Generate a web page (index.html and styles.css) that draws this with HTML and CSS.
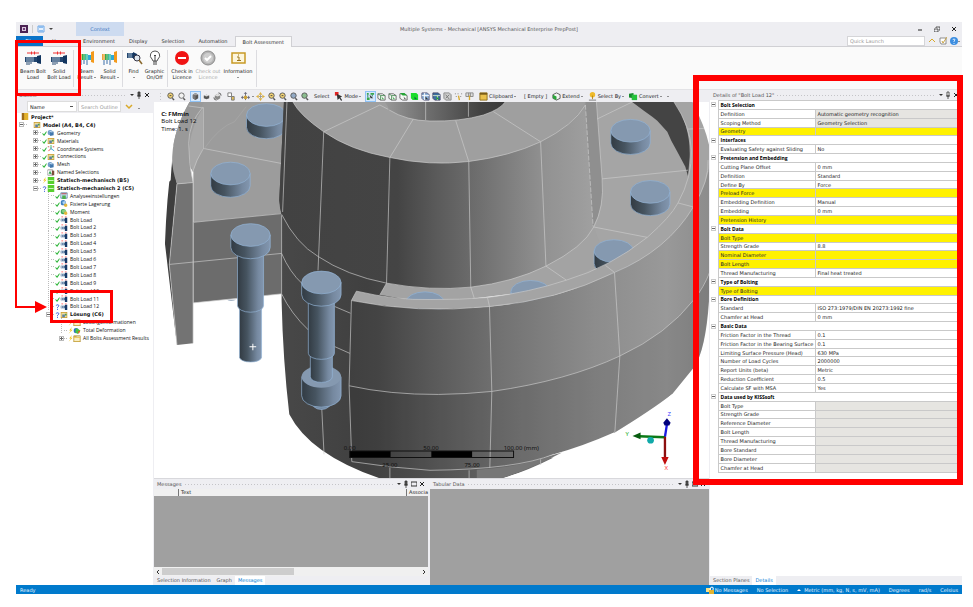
FILE: index.html
```html
<!DOCTYPE html>
<html lang="en">
<head>
<meta charset="utf-8">
<title>Multiple Systems - Mechanical</title>
<link rel="stylesheet" href="styles.css">
</head>
<body>
<svg class="defs" aria-hidden="true">
  <defs>
    <symbol id="bolt-load" viewBox="0 0 18 16"><path d="M3 3h4M11 3h4" stroke="#e33" stroke-width="1"/><path d="M7 1l2 2-2 2zM11 1L9 3l2 2z" fill="#e33"/><path d="M1 7h12v5H1z" fill="#23466f"/><path d="M3 7v5M5 7v5M7 7v5M9 7v5" stroke="#a9bccf" stroke-width="1"/><path d="M13 6l4-1v9l-4-1z" fill="#12355f"/><path d="M3 12v3M5 12v3M7 12v2" stroke="#23466f"/></symbol>
    <symbol id="bolt-result" viewBox="0 0 18 16"><path d="M1 4h3v6H1z" fill="#e8a33c"/><path d="M4 4h3v6H4z" fill="#35a84b"/><path d="M7 4h3v6H7z" fill="#39bfa0"/><path d="M10 5h3v5h-3z" fill="#2fa9d6"/><path d="M13 2l3 -1v12l-3-1z" fill="#f39a1c"/><path d="M3 10v5M6 10v4M9 10v5" stroke="#3b6ea8"/><path d="M3 4v6M6 4v6M9 4v6" stroke="#fff" stroke-opacity=".5"/></symbol>
    <symbol id="tree-bolt" viewBox="0 0 8 8"><path d="M1 1h2M5 1h2" stroke="#f66" stroke-width="1"/><path d="M0 3h5v3H0z" fill="#466a94"/><path d="M1 3v4M3 3v4" stroke="#c5d3e2" stroke-width="1"/><path d="M5 2h3v6H5z" fill="#163a68"/></symbol>
    <symbol id="folder" viewBox="0 0 8 8"><path d="M0 1h3l1 1h4v6H0z" fill="#e6bd4a"/><path d="M1 3h6v4H1z" fill="#f8eec4"/><path d="M0 1h8v7H0z" fill="none" stroke="#a98b36" stroke-width="1"/></symbol>
    <symbol id="folder-part" viewBox="0 0 8 8"><path d="M0 1h8v7H0z" fill="#c89a2c"/><path d="M1 2h6v5H1z" fill="#efdda0"/><path d="M2 4h3v3H2z" fill="#5b7fa3"/><path d="M5 3h2v2H5z" fill="#4b9b52"/></symbol>
    <symbol id="solid" viewBox="0 0 8 8"><circle cx="3" cy="4" r="3" fill="#6f9cc9"/><path d="M3 2l4 1v4l-4 1z" fill="#4176ac"/><path d="M3 2l4 1-2 1-3-1z" fill="#b8d3ee"/></symbol>
    <symbol id="load" viewBox="0 0 8 8"><circle cx="3" cy="3" r="3" fill="#3e7fc0"/><path d="M2 2l3-1 1 3-3 1z" fill="#a9d0f1"/><circle cx="6" cy="6" r="2" fill="#e3b73f"/></symbol>
    <symbol id="moment" viewBox="0 0 8 8"><circle cx="3" cy="4" r="3" fill="#3ba55b"/><path d="M1 3l4-2 2 3-4 2z" fill="#86cf83"/><circle cx="6" cy="6" r="2" fill="#e3b73f"/></symbol>
    <symbol id="axes" viewBox="0 0 8 8"><path d="M4 4V0" stroke="#35b44a"/><path d="M4 4L1 7" stroke="#e33"/><path d="M4 4l4 3" stroke="#2aa7df"/><circle cx="4" cy="4" r="1.300" fill="#7bc"/><path d="M0 2h2M6 2h2" stroke="#c55"/></symbol>
    <symbol id="named" viewBox="0 0 8 8"><path d="M0 1h6v6H0z" fill="#fff" stroke="#888"/><path d="M1 5l2-3 2 4z" fill="#3ba55b"/><path d="M5 2h3v5H5z" fill="#7d4c3a"/></symbol>
    <symbol id="system" viewBox="0 0 8 8"><path d="M0 0h8v8H0z" fill="#58cf2e"/><path d="M1 4h6" stroke="#d9ffd0" stroke-width="1"/></symbol>
    <symbol id="settings" viewBox="0 0 8 8"><path d="M0 1h8v6H0z" fill="#b9d7ec" stroke="#4d7aa0"/><path d="M2 4h4v4H2z" fill="#4fae4d"/><path d="M1 2h6" stroke="#c44"/></symbol>
    <symbol id="deform" viewBox="0 0 8 8"><circle cx="3" cy="4" r="3" fill="#2b75c4"/><path d="M3 1l5 3-3 4-3-2z" fill="#4fc23b"/><path d="M5 5l3-1-2 4z" fill="#e85a24"/></symbol>
    <symbol id="book" viewBox="0 0 8 8"><path d="M1 0h7v8H1z" fill="#e2b22e"/><path d="M0 0h3v8H0z" fill="#9c6b1b"/></symbol>
    <symbol id="check" viewBox="0 0 5 8"><path d="M0 5l2 2 3-4" fill="none" stroke="#2fb53a" stroke-width="1.200"/></symbol>
    <symbol id="flash" viewBox="0 0 5 8"><path d="M4 0L1 4h2L0 8l5-5H3l1-3z" fill="#f2c51b"/></symbol>
    <symbol id="query" viewBox="0 0 5 8"><path d="M1 3q0-1 1.500-1t1.500 1-1.500 2v1M2.500 7v1" fill="none" stroke="#2b4bd5"/></symbol>

    <symbol id="magnify" viewBox="0 0 10 10"><circle cx="5" cy="4" r="3" fill="#f2f2f2" stroke="#666"/><path d="M7 7l2 2" stroke="#555" stroke-width="1.500"/></symbol>
    <symbol id="magnify-y" viewBox="0 0 10 10"><circle cx="5" cy="4" r="3" fill="#f1d274" stroke="#555"/><path d="M7 7l2 2" stroke="#555" stroke-width="1.500"/><path d="M4 4h2" stroke="#444"/></symbol>
    <symbol id="magnify-b" viewBox="0 0 10 10"><circle cx="5" cy="4" r="3" fill="#92a9c5" stroke="#555"/><path d="M7 7l2 2" stroke="#555" stroke-width="1.500"/></symbol>
    <symbol id="magnify-g" viewBox="0 0 10 10"><circle cx="5" cy="4" r="3" fill="#8bbd8f" stroke="#555"/><path d="M7 7l2 2" stroke="#555" stroke-width="1.500"/></symbol>
    <symbol id="cube" viewBox="0 0 10 10"><path d="M2 3l3-2 3 2v4L5 9 2 7z" fill="#555"/><path d="M2 3l3-2 3 2-3 1z" fill="#a3a3a3"/><path d="M5 4v5L2 7V3z" fill="#787878"/></symbol>
    <symbol id="cube-flat" viewBox="0 0 10 10"><path d="M2 4l3-1 3 1v3L5 8 2 7z" fill="#555"/><path d="M2 4l3-1 3 1-3 1z" fill="#ddd"/></symbol>
    <symbol id="cube-spin" viewBox="0 0 10 10"><path d="M2 4l3-2 3 2v3L5 9 2 7z" fill="#888"/><path d="M2 4l3-2 3 2-3 1z" fill="#ddd"/><path d="M6 1q3 0 3 3M1 6q0 3 3 3" fill="none" stroke="#555"/></symbol>
    <symbol id="boxes" viewBox="0 0 10 10"><path d="M1 1h4v4H1z" fill="#fff" stroke="#777"/><path d="M5 5h3v4H5z" fill="#e2bf5a" stroke="#777"/></symbol>
    <symbol id="triad" viewBox="0 0 10 10"><path d="M5 1v8M1 6h8" stroke="#667" stroke-width="1"/><path d="M5 0l2 2H3zM0 6l2-2v4zM10 6L8 4v4z" fill="#667"/><circle cx="5" cy="6" r="2" fill="#c9a03a"/></symbol>
    <symbol id="pan" viewBox="0 0 10 10"><path d="M5 0l2 3H3zM5 10l2-3H3zM0 5l3-2v4zM10 5L7 3v4z" fill="#e0b23a"/><path d="M5 3v4M3 5h4" stroke="#999"/></symbol>
    <symbol id="cursor" viewBox="0 0 10 10"><path d="M1 0h4v4H1z" fill="#e32222"/><path d="M3 2l6 3-2 1 2 3-1 1-2-3-2 2z" fill="#333"/></symbol>
    <symbol id="pick" viewBox="0 0 10 10"><path d="M1 1h2v2H1zM1 6h3v3H1zM5 1h4v2H5z" fill="#39a84b"/><path d="M4 3l4 4H5z" fill="#333"/><path d="M2 3v3M7 3v2" stroke="#276"/></symbol>
    <symbol id="sel" viewBox="0 0 10 10"><path d="M1 2h5l3 2v5H4L1 7z" fill="#f6faf6" stroke="#666"/><path d="M1 2l3 2h5M4 4v5" fill="none" stroke="#4b8c58"/><path d="M5 5l3 3H6z" fill="#39a84b"/></symbol>
    <symbol id="sel-top" viewBox="0 0 10 10"><path d="M1 2h5l3 2v5H4L1 7z" fill="#f6faf6" stroke="#666"/><path d="M1 1h5l3 3H4z" fill="#25a536"/><path d="M5 5l3 3H6z" fill="#555"/></symbol>
    <symbol id="sel-body" viewBox="0 0 10 10"><path d="M1 1h6l2 2v6H3L1 7z" fill="#1bdc2b"/><path d="M5 5l3 3H5z" fill="#164"/></symbol>
    <symbol id="sel-node" viewBox="0 0 10 10"><path d="M1 1h6l2 2v6H3L1 7z" fill="#8fb4dc" stroke="#557"/><path d="M1 4h8M4 1v8" stroke="#fff"/><path d="M5 5l3 3H5z" fill="#333"/></symbol>
    <symbol id="sel-elem" viewBox="0 0 10 10"><path d="M1 1h6l2 2v6H3L1 7z" fill="#3c6ea3" stroke="#446"/><path d="M1 4h8M6 4v5" stroke="#cfe4c6"/><path d="M5 5l3 3H5z" fill="#2a2"/></symbol>
    <symbol id="sel-grey" viewBox="0 0 10 10"><path d="M1 1h6l2 2v6H3L1 7z" fill="#ccc" stroke="#888"/><path d="M3 3l4 5M7 3L3 7" stroke="#777"/></symbol>
    <symbol id="probe" viewBox="0 0 10 10"><path d="M1 2h1M4 2h1M8 2h1M2 5h1M7 5h1" stroke="#777"/><path d="M5 4l1 5" stroke="#d8a92b" stroke-width="1.500"/></symbol>
    <symbol id="probe-box" viewBox="0 0 10 10"><path d="M1 1h8v4H1z" fill="#ddd" stroke="#888"/><path d="M4 1v4M6 1v4" stroke="#888"/><path d="M5 4v5" stroke="#d8a92b" stroke-width="1.500"/></symbol>
    <symbol id="clip" viewBox="0 0 10 10"><path d="M1 1h8v8H1z" fill="#e9c04c" stroke="#8d6d1b"/><path d="M1 1h8v2H1z" fill="#7b5c18"/></symbol>
    <symbol id="extend" viewBox="0 0 10 10"><path d="M1 3l4-2 4 2v4L5 9 1 7z" fill="#f2f7f2" stroke="#555"/><path d="M1 3l4 2v4L1 7z" fill="#2aa53a"/></symbol>
    <symbol id="select-by" viewBox="0 0 10 10"><circle cx="5" cy="3" r="3" fill="#efba2a"/><path d="M5 4v4" stroke="#b58413"/><path d="M1 9h8" stroke="#777"/></symbol>
    <symbol id="convert" viewBox="0 0 10 10"><path d="M0 2l5-1v6l-5-1z" fill="#178b2c"/><path d="M3 3h6v6H3z" fill="#27c23c"/></symbol>
  </defs>
</svg>

<div class="app">
  <header class="titlebar">
    <div class="quick">
      <svg class="logo" viewBox="0 0 8 8"><path d="M0 0h8v8H0z" fill="#4b2253"/><path d="M2 2h4v4H2z" fill="#d9c7dd"/><path d="M3 3h2v2H3z" fill="#6d3b77"/></svg>
      <span class="bar"></span>
      <button class="plain" aria-label="Save"><svg viewBox="0 0 8 8"><path d="M1 1h6v6H1z" fill="#e4f1ff" stroke="#6fa8e6"/><path d="M2 1h4v2H2zM2 5h4v2H2z" fill="#8dbdf0"/></svg></button>
      <span class="caret"></span>
    </div>
    <span class="context">Context</span>
    <span class="caption">Multiple Systems - Mechanical [ANSYS Mechanical Enterprise PrepPost]</span>
    <div class="winbtns">
      <button class="plain" aria-label="Minimize"><svg viewBox="0 0 6 6"><path d="M1 4h4" stroke="#222"/></svg></button>
      <button class="plain" aria-label="Restore"><svg viewBox="0 0 6 6"><path d="M2 2V1h4v3H5M0 3h4v3H0z" fill="none" stroke="#333" stroke-width=".8"/></svg></button>
      <button class="plain" aria-label="Close"><svg viewBox="0 0 6 6"><path d="M1 1l4 4M5 1L1 5" stroke="#222"/></svg></button>
    </div>
  </header>

  <nav class="tabs">
    <a class="tab file" href="#">File</a><a class="tab home" href="#">Home</a><a class="tab" href="#">Environment</a><a class="tab" href="#">Display</a><a class="tab" href="#">Selection</a><a class="tab" href="#">Automation</a><a class="tab current" href="#">Bolt Assessment</a>
    <div class="launch">
      <input type="text" placeholder="Quick Launch" aria-label="Quick Launch">
      <svg viewBox="0 0 8 8"><path d="M1 5l3-3 3 3" fill="none" stroke="#d9a928" stroke-width="1"/></svg>
      <svg viewBox="0 0 8 8"><path d="M1 1h6v6H2L1 5z" fill="#fff" stroke="#666" stroke-width=".7"/><path d="M3 4l1 2 4-6" fill="none" stroke="#c9a343"/></svg>
      <svg class="help" viewBox="0 0 10 8"><circle cx="4" cy="4" r="4" fill="#3c8ee0"/><path d="M3 3q0-1 1-1t1 1L4 4v1M4 6v1" fill="none" stroke="#fff" stroke-width=".8"/><path d="M8 4h2L9 5z" fill="#333"/></svg>
    </div>
  </nav>

  <div class="ribbon">
    <button class="tool"><svg viewBox="0 0 18 16"><use href="#bolt-load"/></svg><span>Beam Bolt<br>Load</span></button>
    <button class="tool"><svg viewBox="0 0 18 16"><use href="#bolt-load"/></svg><span>Solid<br>Bolt Load</span></button>
    <span class="split"></span>
    <button class="tool mid"><svg viewBox="0 0 18 16"><use href="#bolt-result"/></svg><span>Beam<br>Result<i class="dd"></i></span></button>
    <button class="tool mid"><svg viewBox="0 0 18 16"><use href="#bolt-result"/></svg><span>Solid<br>Result<i class="dd"></i></span></button>
    <span class="split"></span>
    <button class="tool slim"><svg viewBox="0 0 18 16"><path d="M2 3h6v5H2z" fill="#23466f"/><path d="M4 3v5M6 3v5" stroke="#9fb5cb"/><path d="M8 2l4 2v4l-4 1z" fill="#12355f"/><circle cx="12" cy="8" r="3" fill="#dfe7ef" stroke="#334"/><path d="M14 10l3 4" stroke="#8a6a2f" stroke-width="1.500"/></svg><span>Find<br><i class="dd"></i></span></button>
    <button class="tool mid"><svg viewBox="0 0 18 16"><path d="M9 1a4.500 4.500 0 0 1 3 8l-1 2H7L6 9a4.500 4.500 0 0 1 3-8z" fill="#fff" stroke="#555"/><path d="M7 12h4M7 14h4M9 11V6M8 5l1 1 1-1" fill="none" stroke="#444"/></svg><span>Graphic<br>On/Off</span></button>
    <span class="split"></span>
    <button class="tool"><svg viewBox="0 0 18 16"><circle cx="9" cy="8" r="7" fill="#f01414"/><path d="M5 7h8v2H5z" fill="#fff"/></svg><span>Check in<br>Licence</span></button>
    <button class="tool" disabled><svg viewBox="0 0 18 16"><circle cx="9" cy="8" r="7" fill="#b5b5b5" stroke="#8c8c8c"/><circle cx="9" cy="8" r="5" fill="#cecece"/><path d="M6 8l2 2 4-4" fill="none" stroke="#fff" stroke-width="2"/></svg><span>Check out<br>Licence</span></button>
    <button class="tool wide"><svg viewBox="0 0 18 16"><path d="M3 3h13v10H3z" fill="#fdf6dc" stroke="#c79a26" stroke-width="1.500"/><path d="M9 5h1M8 7h2v3M8 10.500h4" fill="none" stroke="#9b7417"/></svg><span>Information<br><i class="dd"></i></span></button>
    <span class="split"></span>
  </div>

  <div class="work">
    <aside class="outline">
      <div class="panehead"><span>Outline</span><span class="grip"></span><i class="dd big"></i><svg viewBox="0 0 6 8"><path d="M2 1h2v4H2zM1 5h4M3 5v3" fill="#555" stroke="#333" stroke-width=".8"/></svg><svg viewBox="0 0 6 8"><path d="M1 2l4 4M5 2L1 6" stroke="#222"/></svg></div>
      <div class="search">
        <select aria-label="Search by"><option>Name</option></select>
        <input type="text" placeholder="Search Outline" aria-label="Search Outline">
        <svg viewBox="0 0 8 8"><path d="M1 2l3 3 3-3" fill="none" stroke="#d9a928" stroke-width="1.500"/></svg><i class="dd"></i>
      </div>
      <ul class="tree">
        <li class="l0"><svg class="ic" viewBox="0 0 8 8"><use href="#book"/></svg><b>Project*</b></li>
        <li class="l1 open"><i></i><s></s><em></em><svg class="ic" viewBox="0 0 8 8"><use href="#folder-part"/></svg><b>Model (A4, B4, C4)</b></li>
        <li class="l2 shut"><i></i><s></s><svg class="st" viewBox="0 0 5 8"><use href="#check"/></svg><svg class="ic" viewBox="0 0 8 8"><use href="#solid"/></svg>Geometry</li>
        <li class="l2 shut"><i></i><s></s><svg class="st" viewBox="0 0 5 8"><use href="#check"/></svg><svg class="ic" viewBox="0 0 8 8"><use href="#folder-part"/></svg>Materials</li>
        <li class="l2 shut"><i></i><s></s><svg class="st" viewBox="0 0 5 8"><use href="#check"/></svg><svg class="ic" viewBox="0 0 8 8"><use href="#axes"/></svg>Coordinate Systems</li>
        <li class="l2 shut"><i></i><s></s><svg class="st" viewBox="0 0 5 8"><use href="#check"/></svg><svg class="ic" viewBox="0 0 8 8"><use href="#folder-part"/></svg>Connections</li>
        <li class="l2 shut"><i></i><s></s><svg class="st" viewBox="0 0 5 8"><use href="#check"/></svg><svg class="ic" viewBox="0 0 8 8"><use href="#solid"/></svg>Mesh</li>
        <li class="l2 shut"><i></i><s></s><em></em><svg class="ic" viewBox="0 0 8 8"><use href="#named"/></svg>Named Selections</li>
        <li class="l2 shut"><i></i><s></s><svg class="st" viewBox="0 0 5 8"><use href="#flash"/></svg><svg class="ic" viewBox="0 0 8 8"><use href="#system"/></svg><b>Statisch-mechanisch (B5)</b></li>
        <li class="l2 open"><i></i><s></s><svg class="st" viewBox="0 0 5 8"><use href="#query"/></svg><svg class="ic" viewBox="0 0 8 8"><use href="#system"/></svg><b>Statisch-mechanisch 2 (C5)</b></li>
        <li class="l3"><i></i><s></s><svg class="st" viewBox="0 0 5 8"><use href="#check"/></svg><svg class="ic" viewBox="0 0 8 8"><use href="#settings"/></svg>Analyseeinstellungen</li>
        <li class="l3"><i></i><s></s><svg class="st" viewBox="0 0 5 8"><use href="#check"/></svg><svg class="ic" viewBox="0 0 8 8"><use href="#load"/></svg>Fixierte Lagerung</li>
        <li class="l3"><i></i><s></s><svg class="st" viewBox="0 0 5 8"><use href="#check"/></svg><svg class="ic" viewBox="0 0 8 8"><use href="#moment"/></svg>Moment</li>
        <li class="l3"><i></i><s></s><svg class="st" viewBox="0 0 5 8"><use href="#check"/></svg><svg class="ic" viewBox="0 0 8 8"><use href="#tree-bolt"/></svg>Bolt Load</li>
        <li class="l3"><i></i><s></s><svg class="st" viewBox="0 0 5 8"><use href="#check"/></svg><svg class="ic" viewBox="0 0 8 8"><use href="#tree-bolt"/></svg>Bolt Load 2</li>
        <li class="l3"><i></i><s></s><svg class="st" viewBox="0 0 5 8"><use href="#check"/></svg><svg class="ic" viewBox="0 0 8 8"><use href="#tree-bolt"/></svg>Bolt Load 3</li>
        <li class="l3"><i></i><s></s><svg class="st" viewBox="0 0 5 8"><use href="#check"/></svg><svg class="ic" viewBox="0 0 8 8"><use href="#tree-bolt"/></svg>Bolt Load 4</li>
        <li class="l3"><i></i><s></s><svg class="st" viewBox="0 0 5 8"><use href="#check"/></svg><svg class="ic" viewBox="0 0 8 8"><use href="#tree-bolt"/></svg>Bolt Load 5</li>
        <li class="l3"><i></i><s></s><svg class="st" viewBox="0 0 5 8"><use href="#check"/></svg><svg class="ic" viewBox="0 0 8 8"><use href="#tree-bolt"/></svg>Bolt Load 6</li>
        <li class="l3"><i></i><s></s><svg class="st" viewBox="0 0 5 8"><use href="#check"/></svg><svg class="ic" viewBox="0 0 8 8"><use href="#tree-bolt"/></svg>Bolt Load 7</li>
        <li class="l3"><i></i><s></s><svg class="st" viewBox="0 0 5 8"><use href="#check"/></svg><svg class="ic" viewBox="0 0 8 8"><use href="#tree-bolt"/></svg>Bolt Load 8</li>
        <li class="l3"><i></i><s></s><svg class="st" viewBox="0 0 5 8"><use href="#check"/></svg><svg class="ic" viewBox="0 0 8 8"><use href="#tree-bolt"/></svg>Bolt Load 9</li>
        <li class="l3"><i></i><s></s><svg class="st" viewBox="0 0 5 8"><use href="#check"/></svg><svg class="ic" viewBox="0 0 8 8"><use href="#tree-bolt"/></svg>Bolt Load 10</li>
        <li class="l3"><i></i><s></s><svg class="st" viewBox="0 0 5 8"><use href="#check"/></svg><svg class="ic" viewBox="0 0 8 8"><use href="#tree-bolt"/></svg>Bolt Load 11</li>
        <li class="l3"><i></i><s></s><svg class="st" viewBox="0 0 5 8"><use href="#query"/></svg><svg class="ic" viewBox="0 0 8 8"><use href="#tree-bolt"/></svg>Bolt Load 12</li>
        <li class="l3 open"><i></i><s></s><svg class="st" viewBox="0 0 5 8"><use href="#query"/></svg><svg class="ic" viewBox="0 0 8 8"><use href="#folder-part"/></svg><b>Lösung (C6)</b></li>
        <li class="l4"><i></i><s></s><svg class="st" viewBox="0 0 5 8"><use href="#flash"/></svg><svg class="ic" viewBox="0 0 8 8"><use href="#folder"/></svg>Lösungsinformationen</li>
        <li class="l4"><i></i><s></s><svg class="st" viewBox="0 0 5 8"><use href="#flash"/></svg><svg class="ic" viewBox="0 0 8 8"><use href="#deform"/></svg>Total Deformation</li>
        <li class="l4 shut"><i></i><s></s><svg class="st" viewBox="0 0 5 8"><use href="#flash"/></svg><svg class="ic" viewBox="0 0 8 8"><use href="#folder"/></svg>All Bolts Assessment Results</li>
      </ul>
    </aside>

    <main class="centre">
      <div class="viewbar">
        <span class="vgrip"></span>
        <svg viewBox="0 0 10 10"><use href="#magnify-y"/></svg><svg viewBox="0 0 10 10"><use href="#magnify"/></svg>
        <span class="gap"></span>
        <svg class="on" viewBox="0 0 10 10"><use href="#cube"/></svg><svg viewBox="0 0 10 10"><use href="#cube-flat"/></svg><svg viewBox="0 0 10 10"><use href="#cube-spin"/></svg>
        <span class="gap"></span>
        <svg viewBox="0 0 10 10"><use href="#boxes"/></svg>
        <span class="gap"></span>
        <svg viewBox="0 0 10 10"><use href="#triad"/></svg><i class="dd pad"></i><svg viewBox="0 0 10 10"><use href="#pan"/></svg><svg viewBox="0 0 10 10"><use href="#magnify-y"/></svg><svg viewBox="0 0 10 10"><use href="#magnify-y"/></svg><svg viewBox="0 0 10 10"><use href="#magnify-b"/></svg><svg viewBox="0 0 10 10"><use href="#magnify-g"/></svg>
        <span class="word">Select</span>
        <button class="plain"><svg viewBox="0 0 10 10"><use href="#cursor"/></svg>Mode<i class="dd"></i></button>
        <svg class="on" viewBox="0 0 10 10"><use href="#pick"/></svg><svg viewBox="0 0 10 10"><use href="#sel"/></svg><svg viewBox="0 0 10 10"><use href="#sel"/></svg><svg viewBox="0 0 10 10"><use href="#sel-top"/></svg><svg viewBox="0 0 10 10"><use href="#sel-body"/></svg><svg viewBox="0 0 10 10"><use href="#sel-node"/></svg><svg viewBox="0 0 10 10"><use href="#sel-elem"/></svg><svg viewBox="0 0 10 10"><use href="#sel-grey"/></svg><svg viewBox="0 0 10 10"><use href="#probe"/></svg><svg viewBox="0 0 10 10"><use href="#probe-box"/></svg>
        <span class="gap"></span>
        <button class="plain"><svg viewBox="0 0 10 10"><use href="#clip"/></svg>Clipboard<i class="dd"></i></button>
        <span class="word">[ Empty ]</span>
        <button class="plain"><svg viewBox="0 0 10 10"><use href="#extend"/></svg>Extend<i class="dd"></i></button>
        <button class="plain"><svg viewBox="0 0 10 10"><use href="#select-by"/></svg>Select By<i class="dd"></i></button>
        <button class="plain"><svg viewBox="0 0 10 10"><use href="#convert"/></svg>Convert<i class="dd"></i></button>
        <i class="dd pad"></i>
      </div>
      <svg class="scene" viewBox="154 102 555 375" preserveAspectRatio="xMidYMid slice" role="img" aria-label="Flange model with bolts">
        <defs>
          <linearGradient id="hub" gradientUnits="userSpaceOnUse" x1="395" y1="0" x2="1360" y2="0"><stop offset="0" stop-color="#424242"/><stop offset=".36" stop-color="#444"/><stop offset=".48" stop-color="#5a5a5a"/><stop offset=".62" stop-color="#707070"/><stop offset=".82" stop-color="#929292"/><stop offset="1" stop-color="#a3a3a3"/></linearGradient>
          <linearGradient id="wall" gradientUnits="userSpaceOnUse" x1="600" y1="0" x2="1677" y2="0"><stop offset="0" stop-color="#404040"/><stop offset=".08" stop-color="#444"/><stop offset=".22" stop-color="#585858"/><stop offset=".42" stop-color="#727272"/><stop offset=".68" stop-color="#8c8c8c"/><stop offset=".88" stop-color="#999"/><stop offset="1" stop-color="#8c8c8c"/></linearGradient>
          <linearGradient id="lower" gradientUnits="userSpaceOnUse" x1="395" y1="0" x2="1677" y2="0"><stop offset="0" stop-color="#484848"/><stop offset=".2" stop-color="#404040"/><stop offset=".34" stop-color="#4e4e4e"/><stop offset=".5" stop-color="#636363"/><stop offset=".75" stop-color="#7d7d7d"/><stop offset="1" stop-color="#868686"/></linearGradient>
          <linearGradient id="bore" gradientUnits="userSpaceOnUse" x1="700" y1="0" x2="1060" y2="0"><stop offset="0" stop-color="#9a9a9a"/><stop offset=".35" stop-color="#707070"/><stop offset=".8" stop-color="#434343"/><stop offset="1" stop-color="#3a3a3a"/></linearGradient>
          <linearGradient id="shaft"><stop offset="0" stop-color="#323b43"/><stop offset=".35" stop-color="#465460"/><stop offset=".8" stop-color="#7689a0"/><stop offset="1" stop-color="#8397b0"/></linearGradient>
          <g id="head"><path d="M-59 0v37a59 34 0 0 0 118 0V0z" fill="url(#shaft)"/><ellipse rx="59" ry="34" fill="#8599b0"/><path d="M-59 0a59 34 0 0 1 118 0a59 34 0 0 1-118 0v37a59 34 0 0 0 118 0V0" fill="none" stroke="#93b4d6" stroke-width="2"/></g>
        </defs>
        <g transform="translate(150 100) scale(.33333)">
          <path d="M120 6H440V345L132 368V215L60 120z" fill="#9c9c9c"/>
          <path d="M160 22V145L130 215q-30-90 30-190z" fill="#a8a8a8"/>
          <path d="M132 366L398 339V580L132 607z" fill="#6c6c6c"/>
          <path d="M83 250L68 180Q52 290 47 430L83 733L60 492z" fill="#3e3e3e"/>
          <path d="M0 6H120Q73 90 69 165L64 240L0 300z" fill="#fff"/>
          <path d="M120 6H165Q118 70 118 130Q118 190 131 247L83 251Q66 205 69 165Q73 90 120 6z" fill="#999"/>
          <path d="M83 251L131 247V728L83 733L60 492z" fill="#737373"/>
          <path d="M232 598q12 6 28 0z" fill="#8599b0"/>
          <g fill="none" stroke="#cacaca" stroke-width="2"><path d="M162 22V145L396 190M162 145Q140 180 130 215M160 22Q118 70 118 130Q118 190 131 247V728M118 18L162 24M83 251L131 247M83 251L60 492L83 733M60 492L396 459M132 366L396 340M132 607L396 580"/><path d="M165 145Q210 80 255 65L290 20" stroke="#a9a9a9"/></g>
          <use href="#head" x="350" y="45"/><use href="#head" x="243" y="220"/>

          <path d="M1300 6H1625Q1690 140 1677 520L1340 560L690 600V548L1180 500L1330 380z" fill="#a5a5a5"/>
          <path d="M1445 6H1572Q1620 80 1617 170L1612 228L1604 200L1580 155L1562 122L1550 95L1520 62L1505 50L1480 32z" fill="#444"/>
          <path d="M403 6L389 300Q393 325 396 345V600Q400 780 419 940Q480 1060 690 1132H1055Q1240 1080 1390 1000L1020 850L960 560Z" fill="url(#lower)"/>
          <path d="M403 6L389 300Q390 325 396 342Q440 430 505 468Q590 525 710 548Q840 572 962 560Q1090 545 1187 497Q1300 440 1330 380Q1362 320 1355 236L1338 6z" fill="url(#hub)"/>
          <path d="M1305 6L1328 378Q1362 320 1355 236L1338 6z" fill="#8f8f8f"/>
          <path d="M690 583L710 548Q840 572 962 560Q1090 545 1187 497Q1300 440 1330 380L1365 470L1250 560L840 610z" fill="#a3a3a3"/>
          <path d="M430 6Q450 45 522 95Q600 150 720 172Q840 198 956 184Q1080 168 1171 125Q1270 75 1305 6z" fill="#9f9f9f"/>
          <path d="M705 6Q715 20 718 30Q770 62 840 63Q930 65 1000 45Q1050 28 1065 6z" fill="url(#bore)"/>
          <use href="#head" x="1440" y="92"/><use href="#head" x="1499" y="275"/><use href="#head" x="1390" y="452"/><use href="#head" x="1141" y="574"/><use href="#head" x="825" y="608"/>

          <path d="M620 572Q740 600 840 597Q930 598 1012 591Q1140 575 1248 539Q1380 500 1490 411Q1560 350 1582 308Q1625 230 1622 150Q1620 80 1570 6H1625Q1700 150 1672 220Q1660 290 1628 320Q1550 450 1392 516Q1220 600 1018 618Q800 640 605 600z" fill="#a4a4a4"/>
          <path d="M605 600Q800 640 1018 618Q1220 600 1392 516Q1550 450 1628 320Q1676 240 1677 180V560Q1670 740 1630 800L1565 880Q1500 930 1393 995Q1290 1045 1210 1060Q1100 1105 840 1108Q720 1100 606 1082L598 855z" fill="url(#wall)"/>
          <path d="M598 855Q720 882 865 881Q950 880 1025 872Q1250 840 1408 766Q1550 700 1630 597Q1660 560 1677 515Q1672 740 1630 800L1565 880Q1500 930 1393 995Q1290 1045 1210 1060Q1100 1105 840 1108Q720 1100 606 1082z" fill="#222" fill-opacity=".14"/>
          <path d="M1170 1075L1210 1060Q1300 1035 1390 995L1410 1010L1565 880L1660 900L1500 1132H1055Q1120 1115 1210 1070z" fill="#fff"/>
          <path d="M1055 1132Q1150 1100 1235 1055L1180 1070Q1100 1100 980 1106V1132z" fill="#777"/>
          <g fill="none" stroke="#cacaca" stroke-width="2">
            <path d="M430 6Q450 45 522 95Q600 150 720 172Q840 198 956 184Q1080 168 1171 125Q1270 75 1305 15"/>
            <path d="M718 30Q770 62 840 63Q930 65 1000 45Q1050 28 1065 6M827 6V60M955 6V50M522 95L690 15L715 28M720 172L790 57M956 184L917 62M1171 125L1030 35"/>
            <path d="M412 6L399 335M396 342Q440 430 505 468Q590 525 710 548Q840 572 962 560Q1090 545 1187 497Q1300 440 1330 380Q1362 320 1355 236L1338 6M396 345V580"/>
            <path d="M522 95L505 510M720 172L710 548L690 583M956 184L962 560L972 592M1171 125L1187 497L1248 539M1355 236L1612 210M1330 380L1490 411M1340 57L1445 6"/>
            <path d="M1305 15L1328 378" stroke-dasharray="14 5"/>
            <path d="M396 459Q420 515 458 550M555 618L602 638M396 580Q425 640 476 688M555 738L600 758M516 920L523 1060M720 1100V1132M957 1108V1132"/>
            <path d="M620 572Q740 600 840 597Q930 598 1012 591Q1140 575 1248 539Q1380 500 1490 411Q1560 350 1582 308Q1625 230 1622 150Q1620 80 1570 6M620 572L605 600M1582 308L1628 320M1012 591L1018 618M1365 495L1392 516M1612 87L1660 85"/>
            <path d="M605 600Q800 640 1018 618Q1220 600 1392 516Q1550 450 1628 320Q1676 240 1672 180M605 600L598 855L606 1082Q720 1100 840 1108Q1100 1105 1210 1060M598 855Q720 882 865 881Q950 880 1025 872Q1250 840 1408 766Q1550 700 1630 597Q1660 560 1677 515M1018 618L1025 872L1019 1100M1392 516L1408 766L1393 995M1171 1075V1092M1628 320L1634 430"/>
          </g>

          <path d="M270 615V770a33 14 0 0 0 66 0V615z" fill="url(#shaft)" stroke="#93b4d6" stroke-width="2"/>
          <path d="M264 460V615a39 20 0 0 0 78 0V460z" fill="url(#shaft)" stroke="#93b4d6" stroke-width="2"/>
          <use href="#head" x="303" y="404"/>
          <path d="M310 729v20M300 738h20" stroke="#fff" stroke-width="3"/>
          <path d="M484 900a31 26 0 0 0 62 0z" fill="#7388a0" stroke="#93b4d6" stroke-width="2"/>
          <path d="M456 828V885a59 34 0 0 0 118 0V828z" fill="url(#shaft)" stroke="#93b4d6" stroke-width="2"/>
          <ellipse cx="515" cy="828" rx="59" ry="33" fill="#8599b0"/>
          <path d="M482 760V828a33 17 0 0 0 66 0V760z" fill="url(#shaft)" stroke="#93b4d6" stroke-width="2"/>
          <path d="M476 600V758a39 18 0 0 0 78 0V600z" fill="url(#shaft)" stroke="#93b4d6" stroke-width="2"/>
          <use href="#head" x="515" y="546"/>

          <path d="M600 1050h122v20H600zM844 1050h122v20H844z" fill="#000"/>
          <path d="M600 1050h490v20H600z" fill="none" stroke="#111" stroke-width="3"/>
          <path d="M1543 1008L1549 970" stroke="#1a1ae0" stroke-width="7"/><path d="M1549 952l11 14-4 8h-14l-4-8z" fill="#00007c"/>
          <path d="M1543 1009L1465 1006" stroke="#0b7a16" stroke-width="7"/><path d="M1446 1005l24-10v20z" fill="#075c0f"/>
          <path d="M1543 1008V1070" stroke="#8c0f0f" stroke-width="7"/><path d="M1543 1092l-11-24h22z" fill="#c00d0d"/>
          <circle cx="1500" cy="1018" r="10" fill="#11a9a9"/>
        </g>
        <g class="labels">
          <text class="strong" x="162" y="116">C: FMmin</text><text x="162" y="123">Bolt Load 12</text><text x="162" y="131">Time: 1. s</text>
          <g text-anchor="middle"><text x="350" y="449">0.00</text><text x="431" y="449">50.00</text><text x="521" y="449">100.00 (mm)</text><text x="390" y="466">25.00</text><text x="472" y="466">75.00</text></g>
          <g class="axis"><text class="z" x="667" y="415">Z</text><text class="y" x="625" y="435">Y</text><text class="x" x="664" y="469">X</text></g>
        </g>
      </svg>
      <div class="lower">
        <section class="messages">
          <div class="panehead"><span>Messages</span><span class="grip"></span><i class="dd big"></i><svg viewBox="0 0 6 8"><path d="M2 1h2v4H2zM1 5h4M3 5v3" fill="#555" stroke="#333" stroke-width=".8"/></svg><svg viewBox="0 0 6 8"><path d="M0 2h6v4H0z" fill="none" stroke="#333"/></svg><svg viewBox="0 0 6 8"><path d="M1 2l4 4M5 2L1 6" stroke="#222"/></svg></div>
          <div class="cols"><span></span><span>Text</span><span>Associa</span></div>
          <div class="void"></div>
          <div class="scroll"><svg viewBox="0 0 8 8"><path d="M5 2L3 4l2 2" fill="none" stroke="#333"/></svg><span class="track"><span></span></span><svg viewBox="0 0 8 8"><path d="M3 2l2 2-2 2" fill="none" stroke="#333"/></svg></div>
          <nav class="foot"><a href="#">Selection Information</a><a href="#">Graph</a><a class="current" href="#">Messages</a></nav>
        </section>
        <section class="tabular">
          <div class="panehead"><span>Tabular Data</span><span class="grip"></span><i class="dd big"></i><svg viewBox="0 0 6 8"><path d="M2 1h2v4H2zM1 5h4M3 5v3" fill="#555" stroke="#333" stroke-width=".8"/></svg><svg viewBox="0 0 6 8"><path d="M0 2h6v4H0z" fill="none" stroke="#333"/></svg><svg viewBox="0 0 6 8"><path d="M1 2l4 4M5 2L1 6" stroke="#222"/></svg></div>
          <div class="void"></div>
        </section>
      </div>
    </main>

    <aside class="details">
      <div class="panehead"><span>Details of "Bolt Load 12"</span><span class="grip"></span><i class="dd big"></i><svg viewBox="0 0 6 8"><path d="M2 1h2v4H2zM1 5h4M3 5v3" fill="#fff" stroke="#333" stroke-width=".8"/></svg><svg viewBox="0 0 6 8"><path d="M1 2l4 4M5 2L1 6" stroke="#222"/></svg></div>
      <table class="props">
        <colgroup><col class="c0"><col class="c1"><col></colgroup>
        <tbody>
        <tr class="g"><td><i></i></td><th colspan="2">Bolt Selection</th></tr>
        <tr class="ro"><td></td><th>Definition</th><td>Automatic geometry recognition</td></tr>
        <tr class="ro"><td></td><th>Scoping Method</th><td>Geometry Selection</td></tr>
        <tr class="need"><td></td><th>Geometry</th><td></td></tr>
        <tr class="g"><td><i></i></td><th colspan="2">Interfaces</th></tr>
        <tr><td></td><th>Evaluating Safety against Sliding</th><td>No</td></tr>
        <tr class="g"><td><i></i></td><th colspan="2">Pretension and Embedding</th></tr>
        <tr><td></td><th>Cutting Plane Offset</th><td>0 mm</td></tr>
        <tr><td></td><th>Definition</th><td>Standard</td></tr>
        <tr><td></td><th>Define By</th><td>Force</td></tr>
        <tr class="need"><td></td><th>Preload Force</th><td></td></tr>
        <tr><td></td><th>Embedding Definition</th><td>Manual</td></tr>
        <tr><td></td><th>Embedding</th><td>0 mm</td></tr>
        <tr class="need"><td></td><th>Pretension History</th><td></td></tr>
        <tr class="g"><td><i></i></td><th colspan="2">Bolt Data</th></tr>
        <tr class="need"><td></td><th>Bolt Type</th><td></td></tr>
        <tr><td></td><th>Strength Grade</th><td>8.8</td></tr>
        <tr class="need"><td></td><th>Nominal Diameter</th><td></td></tr>
        <tr class="need"><td></td><th>Bolt Length</th><td></td></tr>
        <tr><td></td><th>Thread Manufacturing</th><td>Final heat treated</td></tr>
        <tr class="g"><td><i></i></td><th colspan="2">Type of Bolting</th></tr>
        <tr class="need"><td></td><th>Type of Bolting</th><td></td></tr>
        <tr class="g"><td><i></i></td><th colspan="2">Bore Definition</th></tr>
        <tr><td></td><th>Standard</th><td>ISO 273:1979/DIN EN 20273:1992 fine</td></tr>
        <tr><td></td><th>Chamfer at Head</th><td>0 mm</td></tr>
        <tr class="g"><td><i></i></td><th colspan="2">Basic Data</th></tr>
        <tr><td></td><th>Friction Factor in the Thread</th><td>0.1</td></tr>
        <tr><td></td><th>Friction Factor in the Bearing Surface</th><td>0.1</td></tr>
        <tr><td></td><th>Limiting Surface Pressure (Head)</th><td>630 MPa</td></tr>
        <tr><td></td><th>Number of Load Cycles</th><td>2000000</td></tr>
        <tr><td></td><th>Report Units (beta)</th><td>Metric</td></tr>
        <tr><td></td><th>Reduction Coefficient</th><td>0.5</td></tr>
        <tr><td></td><th>Calculate SF with MSA</th><td>Yes</td></tr>
        <tr class="g"><td><i></i></td><th colspan="2">Data used by KISSsoft</th></tr>
        <tr class="ro"><td></td><th>Bolt Type</th><td></td></tr>
        <tr class="ro"><td></td><th>Strength Grade</th><td></td></tr>
        <tr class="ro"><td></td><th>Reference Diameter</th><td></td></tr>
        <tr class="ro"><td></td><th>Bolt Length</th><td></td></tr>
        <tr class="ro"><td></td><th>Thread Manufacturing</th><td></td></tr>
        <tr class="ro"><td></td><th>Bore Standard</th><td></td></tr>
        <tr class="ro"><td></td><th>Bore Diameter</th><td></td></tr>
        <tr class="ro"><td></td><th>Chamfer at Head</th><td></td></tr>
        </tbody>
      </table>
      <nav class="foot"><a href="#">Section Planes</a><a class="current" href="#">Details</a></nav>
      <div class="mark mark-details"></div>
    </aside>
  </div>

  <footer class="status">
    <span class="ready">Ready</span>
    <span class="note"><svg viewBox="0 0 8 8"><path d="M0 2h5v4H0z" fill="#f7e08a"/><path d="M3 4h5v4H3z" fill="#e3b431"/><path d="M4 4q0-3 2-3t1 3" fill="none" stroke="#fff"/></svg>No Messages</span>
    <span>No Selection</span>
    <span class="units"><i></i>Metric (mm, kg, N, s, mV, mA)</span>
    <span>Degrees</span><span>rad/s</span><span>Celsius</span>
  </footer>

  <div class="mark mark-ribbon"></div>
  <svg class="leader" viewBox="0 0 34 220" aria-hidden="true"><path d="M1 0V211H22" fill="none" stroke="#f00" stroke-width="2"/><path d="M20 205l12 6-12 6z" fill="#f00"/></svg>
  <div class="mark mark-tree"></div>
</div>
</body>
</html>
```
FILE: styles.css
```css
* { box-sizing: border-box; }
body {
  margin: 0;
  padding: 22px 11px 13px 16px;
  min-height: 100vh;
  display: flex;
  background: #fff;
  color: #222;
  font: 5px/6px "DejaVu Sans", sans-serif;
}
svg { display: block; flex: none; }
a { color: inherit; text-decoration: none; }
button, input, select { font: inherit; color: inherit; margin: 0; }
button { border: 0; padding: 0; background: none; }
i, em { font-style: normal; }
.defs { position: absolute; width: 0; height: 0; }

.app { position: relative; flex: 1; min-width: 0; display: flex; flex-direction: column; }
.plain { display: flex; align-items: center; }
.dd { display: inline-block; border: 1px solid transparent; border-top-color: #333; border-bottom: 0; margin-left: 1px; vertical-align: middle; flex: none; }
.dd.big { border-width: 2px; border-bottom: 0; }
.dd.pad { margin: 0 1px; }

/* title bar */
.titlebar { display: flex; height: 14px; background: #eeeef2; align-items: center; }
.quick { width: 60px; display: flex; align-items: center; gap: 4px; padding-left: 4px; }
.quick svg { width: 8px; height: 8px; }
.bar { width: 1px; height: 8px; background: #ccc; }
.caret { border: 2px solid transparent; border-top-color: #444; border-bottom: 0; }
.context { align-self: stretch; width: 48px; background: #cddbf0; color: #3d78c2; display: flex; align-items: center; justify-content: center; }
.caption { flex: 1; text-align: center; color: #555; padding-left: 5px; }
.winbtns { display: flex; gap: 11px; padding-right: 5px; width: 113px; justify-content: flex-end; }
.winbtns svg { width: 6px; height: 6px; }

/* ribbon tabs */
.tabs { display: flex; height: 11px; background: #eeeef2; border-bottom: 1px solid #d0d0d4; align-items: stretch; }
.tab { padding: 0 7px; display: flex; align-items: center; color: #333; }
.file { width: 27px; background: #0a73c8; color: #fff; justify-content: center; }
.home { width: 33px; padding: 0; justify-content: center; }
.tab.current { background: #fafafa; border: 1px solid #d0d0d4; border-width: 1px 1px 0; margin-bottom: -1px; }
.launch { margin-left: auto; display: flex; align-items: center; gap: 3px; padding-right: 2px; }
.launch input { width: 78px; height: 10px; border: 1px solid #d5d5d8; background: #fff; padding: 0 2px; }
.launch svg { width: 8px; height: 8px; }
.launch .help { width: 10px; }
input::placeholder { color: #999; opacity: 1; }

/* ribbon */
.ribbon { display: flex; height: 43px; background: #fafafa; padding: 3px 0 2px 4px; border-bottom: 1px solid #e3e3e6; }
.tool { width: 26px; display: flex; flex-direction: column; align-items: center; gap: 2px; text-align: center; white-space: nowrap; }
.tool svg { width: 18px; height: 16px; }
.tool.mid { width: 23px; }
.tool.slim { width: 19px; }
.tool.wide { width: 34px; }
.tool:disabled { color: #aaa; }
.split { width: 1px; background: #dcdce0; margin: 0 1px; }

/* work area */
.work { flex: 1; display: flex; background: #eeeef2; min-height: 0; }
.panehead { display: flex; align-items: center; height: 10px; padding: 0 3px; gap: 2px; color: #555; background: #eeeef2; flex: none; }
.panehead svg { width: 6px; height: 8px; }
.panehead span { white-space: nowrap; }
.panehead .grip { flex: 1; height: 3px; background: radial-gradient(circle, #c4c4c8 1px, transparent 1px) 0 0 / 3px 3px; }

.outline { width: 137px; flex: none; background: #fff; display: flex; flex-direction: column; }
.search { display: flex; align-items: center; height: 13px; padding-left: 11px; gap: 1px; background: #eeeef2; flex: none; }
.search select { width: 50px; height: 11px; border: 1px solid #ddd; padding: 0 2px; appearance: none; border-radius: 0; background: #fff linear-gradient(#555, #555) right 3px center / 3px 1px no-repeat; }
.search input { width: 43px; height: 11px; border: 1px solid #ddd; padding: 0 2px; background: #fff; }
.search svg { width: 8px; height: 8px; margin-left: 3px; }
.search .dd { margin: 4px 0 0 4px; }

.tree { list-style: none; margin: 0; padding: 0; height: 229px; display: grid; grid-auto-rows: minmax(0, 1fr); font-family: "Open Sans", sans-serif; color: #111; }
.tree li { display: flex; align-items: center; white-space: nowrap; }
.tree b { font-family: "DejaVu Sans", sans-serif; }
.l0 { padding-left: 5px; }
.l1 { padding-left: 3px; }
.l2 { padding-left: 17px; }
.l3 { padding-left: 30px; }
.l4 { padding-left: 43px; }
.tree i { width: 5px; height: 100%; background: repeating-linear-gradient(#bbb 0 1px, transparent 1px 2px) 2px 0 / 1px 100% no-repeat; }
.tree .open i, .tree .shut i { height: 5px; border: 1px solid #bbb; background: linear-gradient(#666, #666) center / 3px 1px no-repeat #fff; }
.tree .shut i { background: linear-gradient(#666, #666) center / 3px 1px no-repeat, linear-gradient(#666, #666) center / 1px 3px no-repeat #fff; }
.tree s { width: 4px; height: 1px; background: repeating-linear-gradient(90deg, #bbb 0 1px, transparent 1px 2px); }
.tree em { width: 5px; }
.st { width: 5px; height: 7px; }
.ic { width: 8px; height: 7px; margin-right: 2px; }

/* centre */
.centre { flex: 1; min-width: 0; display: flex; flex-direction: column; margin-left: 1px; }
.viewbar { display: flex; align-items: center; height: 12px; flex: none; padding-left: 5px; white-space: nowrap; }
.viewbar svg { width: 11px; height: 9px; }
.viewbar .on { height: 11px; background: #d6e8fb; border: 1px solid #8fc2f5; }
.vgrip { width: 3px; height: 8px; margin-right: 3px; background: radial-gradient(circle, #c4c4c8 1px, transparent 1px) 0 0 / 3px 3px; }
.gap { width: 3px; }
.word { margin: 0 4px; }
.viewbar .plain { margin-right: 4px; }
.scene { width: 100%; flex: 1; min-height: 0; background: #fff; }
.labels { font: 6px "Noto Sans", sans-serif; fill: #111; }
.labels .strong { font-weight: 700; }
.axis .z { fill: #44f; }
.axis .y { fill: #2a2; }
.axis .x { fill: #f33; }

.lower { display: flex; gap: 2px; height: 107px; flex: none; border-top: 1px solid #d8d8dc; }
.messages { width: 274px; flex: none; display: flex; flex-direction: column; }
.tabular { flex: 1; min-width: 0; display: flex; flex-direction: column; }
.void { flex: 1; background: #a0a0a0; }
.cols { display: flex; height: 7px; background: #f0f0f0; }
.cols span + span { border-left: 1px solid #777; padding-left: 2px; }
.cols span:nth-child(1) { width: 24px; }
.cols span:nth-child(2) { flex: 1; }
.scroll { display: flex; height: 9px; align-items: center; background: #f0f0f0; flex: none; }
.scroll svg { width: 8px; height: 8px; }
.track { flex: 1; height: 7px; }
.track span { display: block; width: 51%; height: 100%; background: #cdcdcd; }
.foot { display: flex; height: 9px; align-items: stretch; background: #eeeef2; color: #555; flex: none; }
.foot a { padding: 1px 3px; }
.foot .current { background: #fff; color: #0a7fd6; }

/* details */
.details { position: relative; width: 252px; flex: none; background: #fff; display: flex; flex-direction: column; margin-left: 1px; }
.details .foot { margin-top: auto; }
.props { border-collapse: collapse; table-layout: fixed; width: 100%; height: 373px; }
.c0 { width: 8px; }
.c1 { width: 97px; }
.props th, .props td { padding: 0 0 0 2px; border: 1px solid #c9c9c9; text-align: left; font-weight: 400; line-height: 6px; white-space: nowrap; }
.props td:first-child { border: 0; padding: 0; background: #fff; }
.props .g th { font: 700 5px/6px "Open Sans", sans-serif; color: #000; }
.props .g i { display: block; width: 5px; height: 5px; margin-left: 1px; border: 1px solid #ccc; background: linear-gradient(#666, #666) center / 3px 1px no-repeat; }
.props .ro td { background: #e6e5e1; }
.props .need th, .props .need td { background: #fff100; }
.props .need td:first-child, .props .ro td:first-child { background: #fff; }

/* status bar */
.status { display: flex; align-items: center; gap: 9px; height: 9px; padding: 0 4px; background: #007acc; color: #e8f3fc; flex: none; white-space: nowrap; }
.ready { margin-right: auto; }
.note { display: flex; align-items: center; gap: 1px; }
.note svg { width: 8px; height: 8px; }
.units i { display: inline-block; border: 2px solid transparent; border-bottom-color: #fff; border-top: 0; margin-right: 3px; vertical-align: middle; }

/* callouts laid over the window */
.mark { position: absolute; border: 3px solid #f00; pointer-events: none; }
.mark-ribbon { left: -1px; top: 18px; width: 66px; height: 56px; }
.mark-tree { left: 34px; top: 268px; width: 63px; height: 33px; }
.mark-details { left: -17px; right: -1px; top: -15px; height: 410px; border-width: 6px; }
.leader { position: absolute; left: -1px; top: 74px; width: 34px; height: 220px; pointer-events: none; }
```
